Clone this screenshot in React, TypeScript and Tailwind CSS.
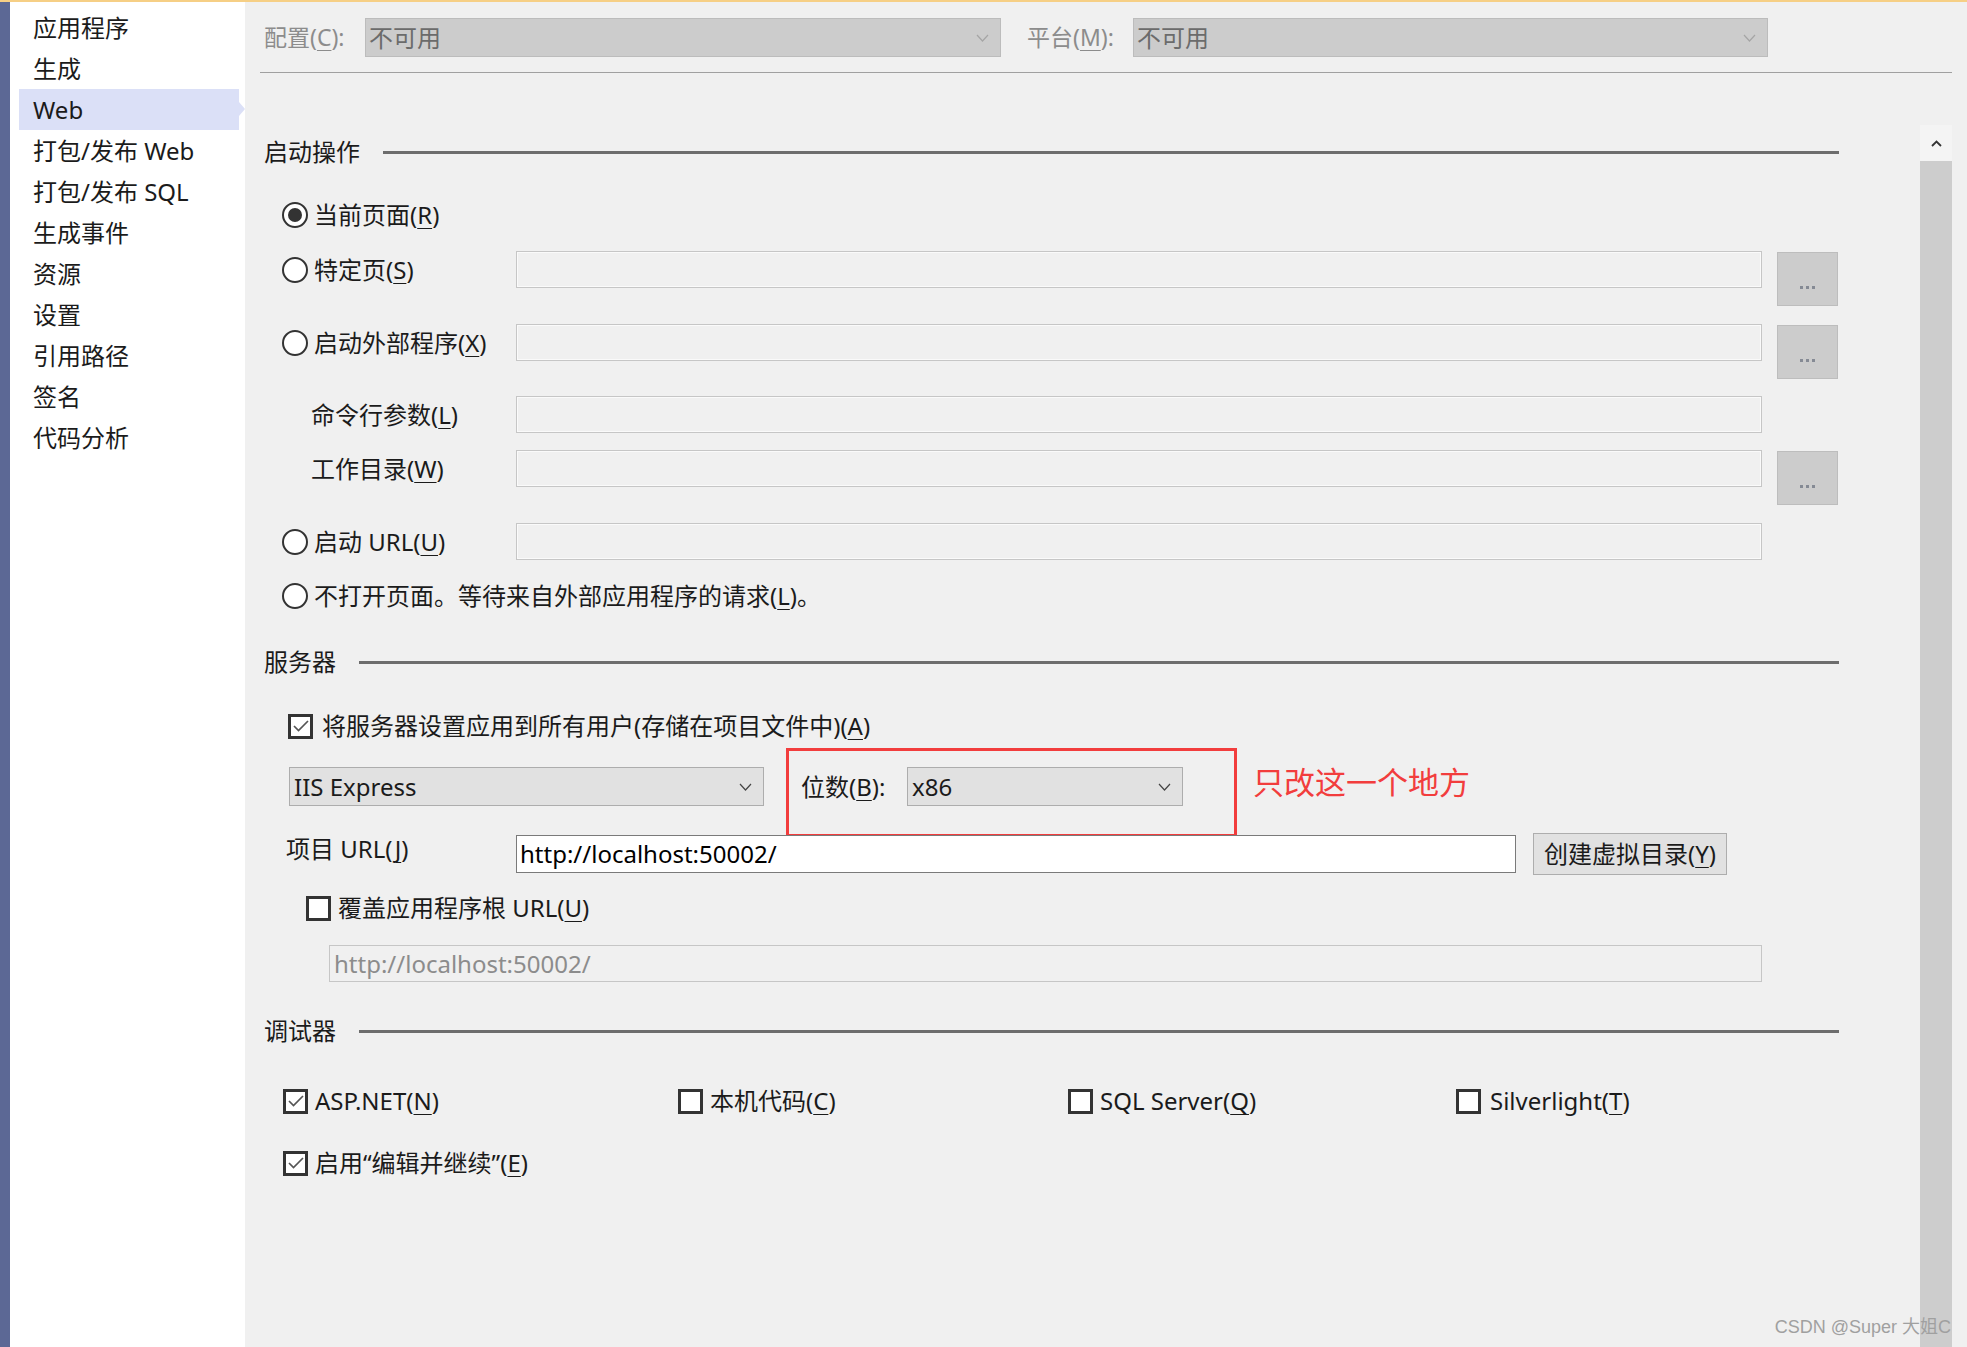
import React from 'react';

const UI_FONT = '"Noto Sans", "Noto Sans CJK SC", sans-serif';

// underlined access key inside a label, e.g. 配置(C)
const K = ({ k }: { k: string }) => (
  <span className="underline decoration-1 underline-offset-[4px]">{k}</span>
);

const Chevron = ({ color = '#333' }: { color?: string }) => (
  <svg width="13" height="8" viewBox="0 0 13 8" className="shrink-0">
    <polyline points="1,1 6.5,7 12,1" fill="none" stroke={color} strokeWidth="1.2" />
  </svg>
);

const Radio = ({ on }: { on?: boolean }) => (
  <span className="w-[26px] h-[26px] rounded-full border-2 border-[#333] bg-white flex items-center justify-center shrink-0">
    {on && <span className="w-[14px] h-[14px] rounded-full bg-[#333]" />}
  </span>
);

const Check = ({ on }: { on?: boolean }) => (
  <span className="w-[25px] h-[25px] border-[3px] border-[#333] bg-white flex items-center justify-center shrink-0">
    {on && (
      <svg width="16" height="12" viewBox="0 0 16 12">
        <polyline points="1,6 5.5,10.5 15,1" fill="none" stroke="#555" strokeWidth="1.7" />
      </svg>
    )}
  </span>
);

const Field = () => (
  <div className="w-[1246px] h-[37px] border border-[#c6c6c6] shadow-[inset_0_0_0_1px_#fafafa]" />
);

// "..." browse button beside a path field
const Browse = () => (
  <div className="ml-[15px] mt-[1px] w-[61px] h-[54px] bg-[#cccccc] border border-[#bdbdbd] flex items-end justify-center gap-[3px] pb-[16px]">
    <span className="w-[3px] h-[3px] bg-[#858a94]" />
    <span className="w-[3px] h-[3px] bg-[#858a94]" />
    <span className="w-[3px] h-[3px] bg-[#858a94]" />
  </div>
);

const Section = ({ title, className }: { title: string; className: string }) => (
  <div className={`flex items-center h-[34px] pl-[19px] pr-[81px] ${className}`}>
    <span className="text-[24px] leading-none">{title}</span>
    <span className="flex-1 h-[3px] bg-[#6d6d6d] ml-[23px]" />
  </div>
);

const navItems = ['应用程序', '生成', 'Web', '打包/发布 Web', '打包/发布 SQL', '生成事件', '资源', '设置', '引用路径', '签名', '代码分析'];

export default function App() {
  return (
    <div
      className="relative w-[1967px] h-[1347px] overflow-hidden flex border-t-2 border-[#f6cf85] text-[#1b1b1b] bg-[#f0f0f0]"
      style={{ fontFamily: UI_FONT }}
    >
      {/* left rail */}
      <div className="w-[10px] bg-[#5c6895] shrink-0" />

      {/* page list */}
      <nav className="w-[235px] shrink-0 bg-white pt-[5px]">
        {navItems.map((item) => {
          const active = item === 'Web';
          return (
            <div
              key={item}
              className={`relative ml-[9px] w-[220px] h-[41px] pl-[14px] flex items-center text-[24px] leading-none ${active ? 'bg-[#dbe0f7]' : ''}`}
            >
              {item}
              {active && (
                <span className="absolute right-[-6px] top-[13px] w-0 h-0 border-y-[7px] border-y-transparent border-l-[6px] border-l-[#dbe0f7]" />
              )}
            </div>
          );
        })}
      </nav>

      {/* property page */}
      <div className="flex-1 flex flex-col min-w-0">
        <div className="flex items-center pt-[16px] pl-[19px] text-[23px] leading-none">
          <span className="w-[101px] text-[#8c8c8c]">配置(<K k="C" />):</span>
          <div className="w-[636px] h-[39px] bg-[#cccccc] border border-[#bcbcbc] flex items-center justify-between pl-[3px] pr-[11px] text-[#6b6b6b] text-[24px]">
            不可用
            <Chevron color="#a5a5a5" />
          </div>
          <span className="ml-[26px] w-[106px] text-[#8c8c8c]">平台(<K k="M" />):</span>
          <div className="w-[635px] h-[39px] bg-[#cccccc] border border-[#bcbcbc] flex items-center justify-between pl-[3px] pr-[11px] text-[#6b6b6b] text-[24px]">
            不可用
            <Chevron color="#a5a5a5" />
          </div>
        </div>
        <div className="mt-[15px] mx-[15px] h-px bg-[#a0a0a0]" />

        <div className="flex-1 flex">
          <div className="flex-1 flex flex-col text-[24px] leading-none">
            <Section title="启动操作" className="mt-[62px]" />

            <div className="mt-[29px] h-[34px] pl-[37px] flex items-center gap-[6px]">
              <Radio on />
              <span>当前页面(<K k="R" />)</span>
            </div>

            <div className="mt-[19px] flex items-start">
              <div className="w-[271px] h-[37px] pl-[37px] flex items-center gap-[6px]">
                <Radio />
                <span>特定页(<K k="S" />)</span>
              </div>
              <Field />
              <Browse />
            </div>

            <div className="mt-[18px] flex items-start">
              <div className="w-[271px] h-[37px] pl-[37px] flex items-center gap-[6px]">
                <Radio />
                <span>启动外部程序(<K k="X" />)</span>
              </div>
              <Field />
              <Browse />
            </div>

            <div className="mt-[17px] flex items-start">
              <div className="w-[271px] h-[37px] pl-[66px] flex items-center">
                命令行参数(<K k="L" />)
              </div>
              <Field />
            </div>

            <div className="mt-[17px] flex items-start">
              <div className="w-[271px] h-[37px] pl-[66px] flex items-center">
                工作目录(<K k="W" />)
              </div>
              <Field />
              <Browse />
            </div>

            <div className="mt-[18px] flex items-start">
              <div className="w-[271px] h-[37px] pl-[37px] flex items-center gap-[6px]">
                <Radio />
                <span>启动 URL(<K k="U" />)</span>
              </div>
              <Field />
            </div>

            <div className="mt-[19px] h-[34px] pl-[37px] flex items-center gap-[6px]">
              <Radio />
              <span>不打开页面。等待来自外部应用程序的请求(<K k="L" />)。</span>
            </div>

            <Section title="服务器" className="mt-[32px]" />

            <div className="mt-[30px] h-[34px] pl-[43px] flex items-center gap-[9px]">
              <Check on />
              <span>将服务器设置应用到所有用户(存储在项目文件中)(<K k="A" />)</span>
            </div>

            <div className="mt-[5px] pl-[44px] flex items-start">
              <div className="mt-[19px] w-[475px] h-[39px] bg-[#e1e1e1] border border-[#adadad] flex items-center justify-between pl-[4px] pr-[11px]">
                IIS Express
                <Chevron color="#444" />
              </div>
              <div className="ml-[22px] w-[451px] h-[89px] border-[3px] border-[#f23d3d] flex items-start pt-[16px] pl-[12px]">
                <span className="w-[106px] h-[39px] flex items-center">位数(<K k="B" />):</span>
                <div className="w-[276px] h-[39px] bg-[#e1e1e1] border border-[#adadad] flex items-center justify-between pl-[4px] pr-[11px]">
                  x86
                  <Chevron color="#444" />
                </div>
              </div>
              <span className="ml-[16px] mt-[14px] text-[31px] leading-[40px] text-[#f23d3d]">只改这一个地方</span>
            </div>

            <div className="-mt-[4px] h-[42px] flex items-center">
              <div className="w-[271px] pl-[41px] mb-[10px]">项目 URL(<K k="J" />)</div>
              <div className="w-[1000px] h-[38px] bg-white border border-[#7a7a7a] flex items-center pl-[3px] text-black">
                http://localhost:50002/
              </div>
              <div className="ml-[17px] w-[194px] h-[42px] bg-[#e1e1e1] border border-[#adadad] flex items-center justify-center">
                创建虚拟目录(<K k="Y" />)
              </div>
            </div>

            <div className="mt-[16px] h-[34px] pl-[61px] flex items-center gap-[7px]">
              <Check />
              <span>覆盖应用程序根 URL(<K k="U" />)</span>
            </div>

            <div className="mt-[20px] ml-[84px] w-[1433px] h-[37px] border border-[#c6c6c6] flex items-center pl-[4px] text-[#8c8c8c]">
              http://localhost:50002/
            </div>

            <Section title="调试器" className="mt-[32px]" />

            <div className="mt-[36px] h-[34px] pl-[38px] flex items-center">
              <div className="w-[395px] flex items-center gap-[7px]">
                <Check on />
                <span>ASP.NET(<K k="N" />)</span>
              </div>
              <div className="w-[390px] flex items-center gap-[7px]">
                <Check />
                <span>本机代码(<K k="C" />)</span>
              </div>
              <div className="w-[388px] flex items-center gap-[7px]">
                <Check />
                <span>SQL Server(<K k="Q" />)</span>
              </div>
              <div className="flex items-center gap-[9px]">
                <Check />
                <span>Silverlight(<K k="T" />)</span>
              </div>
            </div>

            <div className="mt-[28px] h-[34px] pl-[38px] flex items-center gap-[7px]">
              <Check on />
              <span>启用“编辑并继续”(<K k="E" />)</span>
            </div>
          </div>

          {/* vertical scrollbar */}
          <div className="w-[32px] mt-[52px] flex flex-col shrink-0">
            <div className="h-[36px] bg-[#f4f4f4] flex items-center justify-center">
              <svg width="11" height="7" viewBox="0 0 11 7">
                <polyline points="1,6 5.5,1.5 10,6" fill="none" stroke="#333" strokeWidth="1.8" />
              </svg>
            </div>
            <div className="flex-1 bg-[#cdcdcd]" />
          </div>
          <div className="w-[15px] shrink-0" />
        </div>
      </div>

      <span
        className="absolute right-[16px] bottom-[8px] text-[18px] leading-[24px] text-[#a0a0a0]"
        style={{ fontFamily: '"Liberation Sans", "Noto Sans CJK SC", sans-serif' }}
      >
        CSDN @Super 大姐C
      </span>
    </div>
  );
}
